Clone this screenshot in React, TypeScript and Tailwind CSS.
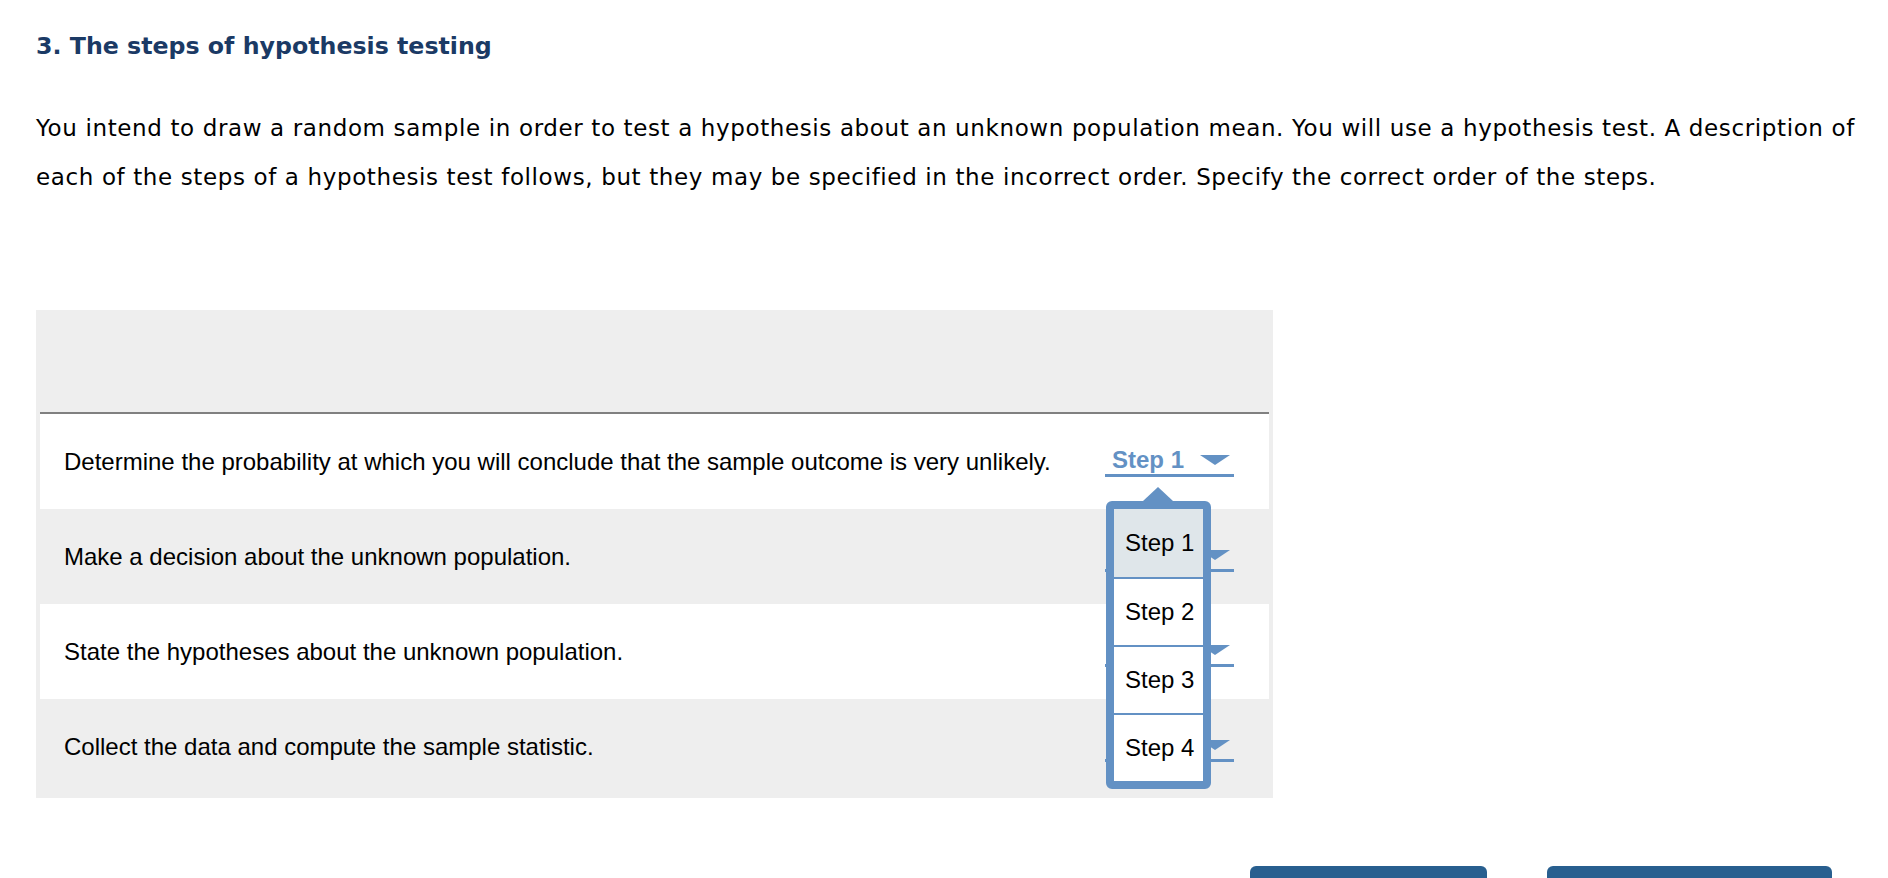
import React from "react";

const rows = [
  { text: "Determine the probability at which you will conclude that the sample outcome is very unlikely.", white: true, value: "Step 1" },
  { text: "Make a decision about the unknown population.", white: false, value: "" },
  { text: "State the hypotheses about the unknown population.", white: true, value: "" },
  { text: "Collect the data and compute the sample statistic.", white: false, value: "" },
];

const options = ["Step 1", "Step 2", "Step 3", "Step 4"];

function Caret() {
  return (
    <svg width="30" height="10" viewBox="0 0 30 10" className="block">
      <polygon points="0,0 30,0 15,10" fill="#6391c4" />
    </svg>
  );
}

function StepSelect({ value }: { value: string }) {
  return (
    <div className="mr-[35px] flex h-[31px] w-[129px] items-center justify-between border-b-[3px] border-[#6391c4] pl-[7px] pr-[4px]">
      <span className="text-[24px] font-bold leading-none text-[#6391c4]">{value}</span>
      <Caret />
    </div>
  );
}

export default function App() {
  return (
    <div className="h-screen overflow-hidden bg-white pl-[36px] pt-[30px] font-['Liberation_Sans',Arial,sans-serif] text-black">
      <h2 className="font-['DejaVu_Sans',Verdana,sans-serif] text-[23.7px] font-bold leading-[32px] text-[#1b3a65]">
        3. The steps of hypothesis testing
      </h2>

      <p className="mt-[42px] w-[1830px] font-['DejaVu_Sans',Verdana,sans-serif] text-[23px] leading-[49px] tracking-[0.62px] text-black">
        You intend to draw a random sample in order to test a hypothesis about an unknown population mean. You will use a hypothesis test. A
        description of each of the steps of a hypothesis test follows, but they may be specified in the incorrect order. Specify the correct
        order of the steps.
      </p>

      <div className="relative mt-[108px] w-[1237px] bg-[#eeeeee] px-[4px] pb-[4px]">
        <div className="h-[102px]" />
        <div className="border-t-2 border-[#808080]">
          {rows.map((r, i) => (
            <div
              key={i}
              className={`flex h-[95px] items-center justify-between pl-[24px] text-[24px] ${r.white ? "bg-white" : ""}`}
            >
              <span>{r.text}</span>
              <StepSelect value={r.value} />
            </div>
          ))}
        </div>

        {/* open dropdown menu */}
        <div className="absolute left-[1070px] top-[191px] w-[105px]">
          <div className="absolute -top-[14px] left-[37px] h-0 w-0 border-x-[15px] border-b-[14px] border-x-transparent border-b-[#6391c4]" />
          <div className="rounded-[6px] border-[8px] border-[#6391c4] bg-white">
            {options.map((o, i) => (
              <div
                key={o}
                className={`flex h-[68px] items-center pl-[11px] text-[24px] ${i > 0 ? "border-t-2 border-[#6391c4]" : ""} ${i === 0 ? "bg-[#dfe6ea]" : "bg-white"}`}
              >
                {o}
              </div>
            ))}
          </div>
        </div>
      </div>

      <div className="mt-[68px] flex gap-[60px] pl-[1214px]">
        <button className="h-[40px] w-[237px] rounded-t-[6px] bg-[#285f8f]" />
        <button className="h-[40px] w-[285px] rounded-t-[6px] bg-[#285f8f]" />
      </div>
    </div>
  );
}
